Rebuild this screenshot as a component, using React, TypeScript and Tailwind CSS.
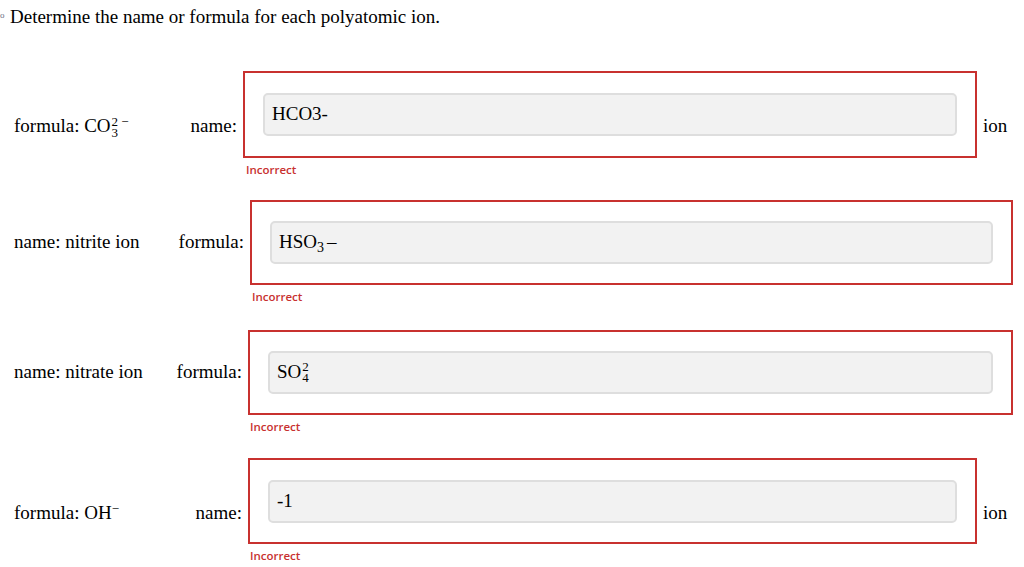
import type { ReactNode } from "react";

const serif = { fontFamily: '"Liberation Serif", "Times New Roman", serif' };

function Stack({ sup, sub }: { sup: string; sub: string }) {
  return (
    <span className="inline-flex flex-col align-middle text-[13px] leading-[11px] ml-px -mt-[2px]">
      <span>{sup}</span>
      <span>{sub}</span>
    </span>
  );
}

interface Row {
  label: ReactNode;
  prompt: string;
  leftW: string;
  boxW: string;
  value: ReactNode;
  suffix: boolean;
  boxH: string;
  top: string;
  incorrectX: string;
}

const rows: Row[] = [
  {
    label: (
      <>
        formula: CO<Stack sup="2 −" sub="3" />
      </>
    ),
    prompt: "name:",
    leftW: "w-[243px]",
    boxW: "w-[734px]",
    value: "HCO3-",
    suffix: true,
    boxH: "h-[87px]",
    top: "mt-[43px]",
    incorrectX: "ml-[246px]",
  },
  {
    label: "name: nitrite ion",
    prompt: "formula:",
    leftW: "w-[250px]",
    boxW: "w-[763px]",
    value: (
      <>
        HSO<span className="text-[14px] inline-block translate-y-[5px]">3</span>
        <span className="ml-[3px]">–</span>
      </>
    ),
    suffix: false,
    boxH: "h-[85px]",
    top: "mt-[23px]",
    incorrectX: "ml-[252px]",
  },
  {
    label: "name: nitrate ion",
    prompt: "formula:",
    leftW: "w-[248px]",
    boxW: "w-[765px]",
    value: (
      <>
        SO<Stack sup="2" sub="4" />
      </>
    ),
    suffix: false,
    boxH: "h-[85px]",
    top: "mt-[26px]",
    incorrectX: "ml-[250px]",
  },
  {
    label: (
      <>
        formula: OH<span className="text-[13px] inline-block -translate-y-[6px]">−</span>
      </>
    ),
    prompt: "name:",
    leftW: "w-[248px]",
    boxW: "w-[729px]",
    value: "-1",
    suffix: true,
    boxH: "h-[86px]",
    top: "mt-[24px]",
    incorrectX: "ml-[250px]",
  },
];

export default function App() {
  return (
    <div className="w-[1024px] h-[567px] bg-white text-black overflow-hidden relative" style={serif}>
      <div className="pt-[6px] pl-[10px] text-[19px] leading-[22px] relative">
        <span className="absolute left-0 top-[11px] text-[9px] leading-none text-gray-500">o</span>
        Determine the name or formula for each polyatomic ion.
      </div>
      {rows.map((r, i) => (
        <div key={i} className={r.top}>
          <div className="flex items-center text-[19px]">
            <div
              className={`${r.leftW} shrink-0 flex items-center justify-between pl-[14px] pr-[6px] whitespace-nowrap ${r.suffix ? "mt-[24px]" : ""}`}
            >
              <span>{r.label}</span>
              <span>{r.prompt}</span>
            </div>
            <div
              className={`${r.boxH} ${r.boxW} shrink-0 border-2 border-[#c8312f] flex items-center px-[18px]`}
            >
              <div className="h-[43px] w-full rounded-[5px] border-2 border-[#dedede] bg-[#f2f2f2] flex items-center pl-[7px] text-[19px] whitespace-nowrap">
                {r.value}
              </div>
            </div>
            {r.suffix && <div className="pl-[6px] mt-[24px]">ion</div>}
          </div>
          <div
            className={`${r.incorrectX} text-[11.5px] leading-[14px] font-semibold text-[#c8312f] mt-[5px]`}
            style={{ fontFamily: '"Open Sans", "Noto Sans", sans-serif' }}
          >
            Incorrect
          </div>
        </div>
      ))}
    </div>
  );
}
